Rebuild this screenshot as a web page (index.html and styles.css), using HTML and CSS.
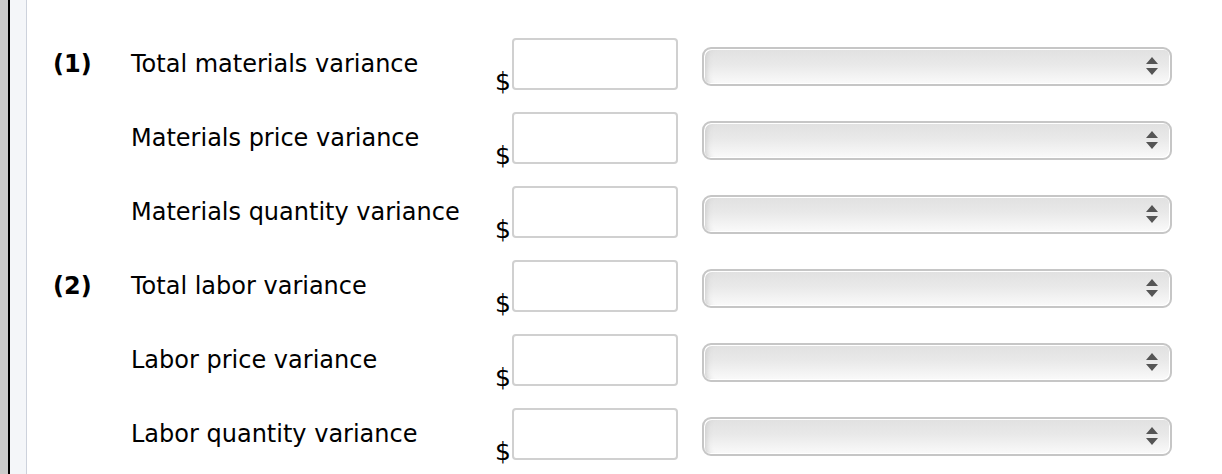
FILE: index.html
```html
<!DOCTYPE html>
<html>
<head>
<meta charset="utf-8">
<link rel="stylesheet" href="styles.css">
</head>
<body>
<div class="page">
  <div class="rail-gray"></div>
  <div class="rail-black"></div>
  <div class="rail-light"></div>
  <div class="content">
    <div class="row">
      <div class="num">(1)</div>
      <div class="label">Total materials variance</div>
      <span class="dollar">$</span><input class="amount" type="text">
      <div class="select"><span class="arrows"><svg width="12" height="18" viewBox="0 0 12 18"><path d="M6 0 L12 7 L0 7 Z M0 11 L12 11 L6 18 Z" fill="#555"/></svg></span></div>
    </div>
    <div class="row">
      <div class="num"></div>
      <div class="label">Materials price variance</div>
      <span class="dollar">$</span><input class="amount" type="text">
      <div class="select"><span class="arrows"><svg width="12" height="18" viewBox="0 0 12 18"><path d="M6 0 L12 7 L0 7 Z M0 11 L12 11 L6 18 Z" fill="#555"/></svg></span></div>
    </div>
    <div class="row">
      <div class="num"></div>
      <div class="label">Materials quantity variance</div>
      <span class="dollar">$</span><input class="amount" type="text">
      <div class="select"><span class="arrows"><svg width="12" height="18" viewBox="0 0 12 18"><path d="M6 0 L12 7 L0 7 Z M0 11 L12 11 L6 18 Z" fill="#555"/></svg></span></div>
    </div>
    <div class="row">
      <div class="num">(2)</div>
      <div class="label">Total labor variance</div>
      <span class="dollar">$</span><input class="amount" type="text">
      <div class="select"><span class="arrows"><svg width="12" height="18" viewBox="0 0 12 18"><path d="M6 0 L12 7 L0 7 Z M0 11 L12 11 L6 18 Z" fill="#555"/></svg></span></div>
    </div>
    <div class="row">
      <div class="num"></div>
      <div class="label">Labor price variance</div>
      <span class="dollar">$</span><input class="amount" type="text">
      <div class="select"><span class="arrows"><svg width="12" height="18" viewBox="0 0 12 18"><path d="M6 0 L12 7 L0 7 Z M0 11 L12 11 L6 18 Z" fill="#555"/></svg></span></div>
    </div>
    <div class="row">
      <div class="num"></div>
      <div class="label">Labor quantity variance</div>
      <span class="dollar">$</span><input class="amount" type="text">
      <div class="select"><span class="arrows"><svg width="12" height="18" viewBox="0 0 12 18"><path d="M6 0 L12 7 L0 7 Z M0 11 L12 11 L6 18 Z" fill="#555"/></svg></span></div>
    </div>
  </div>
</div>
</body>
</html>
```
FILE: styles.css
```css
html, body {
  margin: 0;
  padding: 0;
  background: #fff;
}
body {
  font-family: "DejaVu Sans", Verdana, sans-serif;
  color: #000;
  overflow: hidden;
}
.page {
  display: flex;
  height: 474px;
}
.rail-gray {
  width: 8px;
  background: #cbcbcb;
}
.rail-black {
  width: 2px;
  background: #000;
}
.rail-light {
  width: 16px;
  background: #f4f6f9;
  border-right: 1px solid #cdd2dc;
}
.content {
  flex: 1;
  padding: 38px 0 0 26px;
  display: flex;
  flex-direction: column;
  gap: 22px;
}
.row {
  display: flex;
  align-items: flex-start;
  height: 52px;
}
.num {
  width: 78px;
  margin-top: 14px;
  font-weight: bold;
  font-size: 24px;
  line-height: 24px;
}
.label {
  width: 366px;
  margin-top: 14px;
  font-size: 24px;
  line-height: 24px;
  white-space: nowrap;
}
.dollar {
  align-self: flex-end;
  font-size: 25px;
  line-height: 25px;
  margin: 0 0 -4px -2px;
  width: 17px;
  text-align: left;
}
.amount {
  box-sizing: border-box;
  width: 166px;
  height: 52px;
  margin: 0;
  border: 2px solid #d0d0d0;
  border-radius: 4px;
  background: #fff;
  outline: none;
}
.select {
  position: relative;
  box-sizing: border-box;
  margin: 9px 0 0 24px;
  width: 470px;
  height: 39px;
  border: 2px solid #c6c6c6;
  border-radius: 9px;
  background: linear-gradient(to bottom, #e1e1e1 0%, #e9e9e9 45%, #fafafa 100%);
  box-shadow: inset 1px 1px 0 #fff, inset -1px -1px 0 #fff, inset 8px 0 6px -6px #c8c8c8;
}
.arrows {
  position: absolute;
  right: 12px;
  top: 8px;
  width: 12px;
  height: 18px;
  display: block;
}
.arrows svg {
  display: block;
}
```
